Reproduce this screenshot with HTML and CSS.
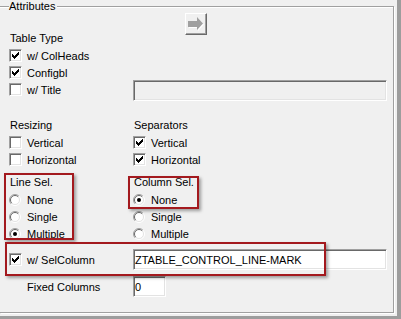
FILE: index.html
```html
<!DOCTYPE html>
<html lang="en">
<head>
  <meta charset="UTF-8">
  <meta name="viewport" content="width=device-width, initial-scale=1.0">
  <title>Attributes</title>
  <link rel="stylesheet" href="styles.css">
</head>
<body>
  <!-- shared glyphs for the classic check / radio controls -->
  <svg class="defs" width="0" height="0" aria-hidden="true">
    <symbol id="tick" viewBox="0 0 11 11">
      <polygon points="2,4 3,4 3,5 4,5 4,6 5,6 5,5 6,5 6,4 7,4 7,3 8,3 8,2 9,2 9,5 8,5 8,6 7,6 7,7 6,7 6,8 5,8 5,9 4,9 4,8 3,8 3,7 2,7" fill="#000"/>
    </symbol>
    <symbol id="radio" viewBox="0 0 12 12">
      <circle cx="6" cy="6" r="5" fill="#fff"/>
      <path d="M2.1 9.9A5.5 5.5 0 0 1 9.9 2.1" fill="none" stroke="#a0a0a0"/>
      <path d="M9.9 2.1A5.5 5.5 0 0 1 2.1 9.9" fill="none" stroke="#fff"/>
      <path d="M2.8 9.2A4.5 4.5 0 0 1 9.2 2.8" fill="none" stroke="#696969"/>
      <path d="M9.2 2.8A4.5 4.5 0 0 1 2.8 9.2" fill="none" stroke="#e3e3e3"/>
    </symbol>
    <symbol id="radio-on" viewBox="0 0 12 12">
      <use href="#radio"/>
      <circle cx="6" cy="6" r="2" fill="#000"/>
    </symbol>
  </svg>

  <div class="frame">
    <fieldset class="group">
      <legend>Attributes</legend>
      <div class="body">
        <div class="toolbar">
          <button class="arrow-btn" disabled>
            <svg width="16" height="14" viewBox="0 0 16 14">
              <polygon points="1,5 10,5 10,1 16,7.5 10,14 10,11 1,11" fill="#fff"/>
              <polygon points="0,4 9,4 9,0 15,6.5 9,13 9,10 0,10" fill="#a0a0a0"/>
            </svg>
          </button>
        </div>

        <div class="caption">Table Type</div>
        <div class="row"><span class="check"><svg><use href="#tick"/></svg></span>w/ ColHeads</div>
        <div class="row"><span class="check"><svg><use href="#tick"/></svg></span>Configbl</div>
        <div class="row">
          <span class="opt"><span class="check"></span>w/ Title</span>
          <span class="field disabled wide"></span>
        </div>

        <div class="cols sec-resize">
          <div>
            <div class="caption">Resizing</div>
            <div class="row"><span class="check"></span>Vertical</div>
            <div class="row"><span class="check"></span>Horizontal</div>
          </div>
          <div>
            <div class="caption">Separators</div>
            <div class="row"><span class="check"><svg><use href="#tick"/></svg></span>Vertical</div>
            <div class="row"><span class="check"><svg><use href="#tick"/></svg></span>Horizontal</div>
          </div>
        </div>

        <div class="cols sec-sel">
          <div>
            <div class="caption">Line Sel.</div>
            <div class="row"><svg class="radio"><use href="#radio"/></svg>None</div>
            <div class="row"><svg class="radio"><use href="#radio"/></svg>Single</div>
            <div class="row"><svg class="radio"><use href="#radio-on"/></svg>Multiple</div>
          </div>
          <div>
            <div class="caption">Column Sel.</div>
            <div class="row"><svg class="radio"><use href="#radio-on"/></svg>None</div>
            <div class="row"><svg class="radio"><use href="#radio"/></svg>Single</div>
            <div class="row"><svg class="radio"><use href="#radio"/></svg>Multiple</div>
          </div>
        </div>

        <div class="row tall sec-selcol">
          <span class="opt"><span class="check"><svg><use href="#tick"/></svg></span>w/ SelColumn</span>
          <span class="field wide">ZTABLE_CONTROL_LINE-MARK</span>
        </div>
        <div class="row tall sec-fixed">
          <span class="opt indent">Fixed Columns</span>
          <span class="field small">0</span>
        </div>

        <!-- red annotation frames drawn over the dialog -->
        <div class="mark mark-line"></div>
        <div class="mark mark-col"></div>
        <div class="mark mark-selcol"></div>
      </div>
    </fieldset>
  </div>
</body>
</html>
```

FILE: styles.css
```css
body {
  margin: 0;
  background-color: #f0f0f0;
  font-family: "Liberation Sans", Arial, sans-serif;
  font-size: 11px;
  color: #000;
}

.defs {
  display: block;
  width: 0;
  height: 0;
}

.frame {
  width: 397px;
  height: 316px;
  border-right: 4px solid #9d9d9d;
  border-bottom: 3px solid #9d9d9d;
}

.group {
  box-sizing: border-box;
  width: 394px;
  height: 313px;
  margin: 0;
  padding: 0 0 0 9px;
  min-width: 0;
  border: 1px solid #a0a0a0;
  border-left: 0;
  box-shadow: inset 0 1px 0 #fff, 1px 1px 0 #fff;
}

.group legend {
  padding: 0 2px 0 0;
  line-height: 13px;
  background-color: #f0f0f0;
}

.body {
  position: relative;
}

.toolbar {
  height: 19px;
  padding-left: 176px;
}

.arrow-btn {
  box-sizing: border-box;
  display: flex;
  align-items: center;
  justify-content: center;
  width: 22px;
  height: 22px;
  padding: 0;
  border: 1px solid;
  border-color: #fff #696969 #696969 #fff;
  box-shadow: inset -1px -1px 0 #a0a0a0;
  background-color: #f0f0f0;
}

.arrow-btn svg {
  display: block;
}

.caption {
  line-height: 13px;
  padding-left: 1px;
  margin-bottom: 2px;
}

.row {
  display: flex;
  align-items: center;
  height: 17px;
  white-space: nowrap;
}

.row.tall {
  height: 21px;
}

.opt {
  display: flex;
  align-items: center;
  width: 124px;
  flex: none;
}

.opt.indent {
  box-sizing: border-box;
  padding-left: 18px;
}

.check {
  box-sizing: border-box;
  flex: none;
  width: 13px;
  height: 13px;
  margin-right: 5px;
  border: 1px solid;
  border-color: #a0a0a0 #fff #fff #a0a0a0;
  box-shadow: inset 1px 1px 0 #696969, inset -1px -1px 0 #e3e3e3;
  background-color: #fff;
}

.check svg {
  display: block;
  width: 11px;
  height: 11px;
}

.radio {
  display: block;
  flex: none;
  width: 12px;
  height: 12px;
  margin-right: 6px;
}

.field {
  box-sizing: border-box;
  display: flex;
  align-items: center;
  flex: none;
  height: 21px;
  padding-left: 1px;
  border: 1px solid;
  border-color: #a0a0a0 #fff #fff #a0a0a0;
  box-shadow: inset 1px 1px 0 #696969, inset -1px -1px 0 #e3e3e3;
  background-color: #fff;
}

.field.disabled {
  background-color: #f0f0f0;
  margin-top: 2px;
}

.field.wide {
  width: 254px;
}

.field.small {
  width: 33px;
}

.cols {
  display: grid;
  grid-template-columns: 124px 1fr;
}

.sec-resize {
  margin-top: 21px;
}

.sec-sel {
  margin-top: 8px;
}

.sec-selcol {
  margin-top: 7px;
}

.sec-fixed {
  margin-top: 6px;
}

/* annotation frames, offsets are from the group's content edge (x 9) */
.mark {
  position: absolute;
  box-sizing: border-box;
  border: 2px solid #a3191e;
  box-shadow: 2px 2px 3px rgba(0, 0, 0, 0.35);
}

.mark-line {
  left: -5px;
  top: 160px;
  width: 70px;
  height: 67px;
}

.mark-col {
  left: 119px;
  top: 163px;
  width: 71px;
  height: 33px;
}

.mark-selcol {
  left: -4px;
  top: 229px;
  width: 321px;
  height: 34px;
}
```
